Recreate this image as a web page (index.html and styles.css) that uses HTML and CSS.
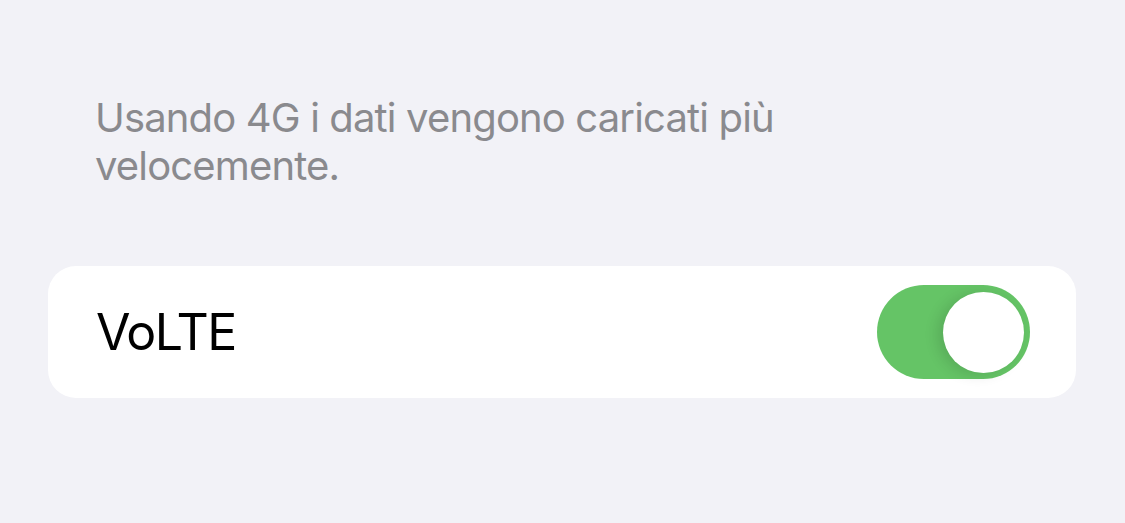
FILE: index.html
```html
<!DOCTYPE html>
<html lang="it">
<head>
    <meta charset="UTF-8">
    <meta name="viewport" content="width=device-width, initial-scale=1.0">
    <title>VoLTE</title>
    <link rel="stylesheet" href="styles.css">
</head>
<body>

<div class="settings">
    <p class="footer-note">Usando 4G i dati vengono caricati più velocemente.</p>

    <div class="group">
        <div class="row">
            <span class="row-label">VoLTE</span>
            <div class="switch on">
                <div class="knob"></div>
            </div>
        </div>
    </div>
</div>

</body>
</html>
```

FILE: styles.css
```css
body {
    margin: 0;
    padding: 0;
    background-color: #f2f2f7;
    font-family: 'Inter', 'Roboto', sans-serif;
    height: 100vh;
}

.settings {
    padding: 94px 49px 0 48px;
}

.footer-note {
    margin: 0 0 76px 0;
    padding-left: 47px;
    max-width: 720px;
    font-size: 40px;
    line-height: 48px;
    letter-spacing: -0.85px;
    color: #8a8a8e;
}

.group {
    background: white;
    border-radius: 28px;
}

.row {
    height: 132px;
    display: flex;
    align-items: center;
    justify-content: space-between;
    padding: 0 46px 0 48px;
}

.row-label {
    font-size: 50px;
    letter-spacing: -1.6px;
    color: #000;
}

.switch {
    width: 153px;
    height: 94px;
    border-radius: 47px;
    background-color: #e9e9eb;
    display: flex;
    align-items: center;
    padding: 0 6px;
    box-sizing: border-box;
}

.switch.on {
    background-color: #65c466;
    justify-content: flex-end;
}

.knob {
    width: 81px;
    height: 81px;
    border-radius: 50%;
    background: white;
    box-shadow: -6px 2px 14px rgba(0, 0, 0, 0.12);
}
```
